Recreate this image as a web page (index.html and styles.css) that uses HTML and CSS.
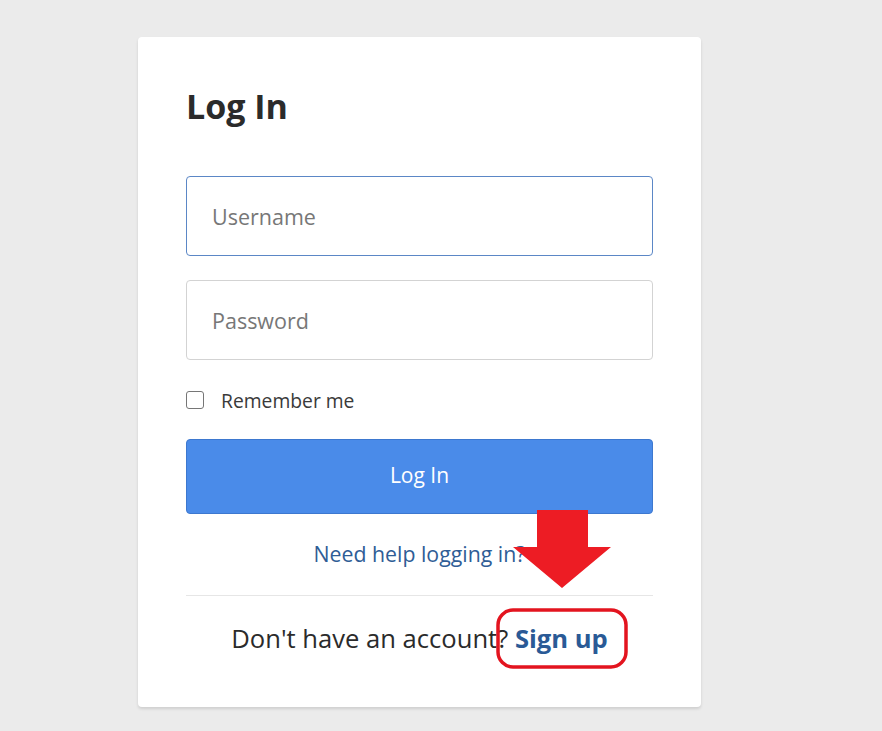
FILE: index.html
```html
<!DOCTYPE html>
<html>
<head>
<meta charset="utf-8">
<link rel="stylesheet" href="styles.css">
</head>
<body>
<div class="card">
  <h1 class="title">Log In</h1>
  <div class="field field-focus">Username</div>
  <div class="field">Password</div>
  <label class="remember"><span class="box"></span><span>Remember me</span></label>
  <div class="btn">Log In</div>
  <div class="help"><a class="help-link">Need help logging in?</a></div>
  <div class="divider"></div>
  <div class="signup">Don't have an account? <a class="signup-link">Sign up</a></div>
</div>
<svg class="overlay" width="882" height="731" viewBox="0 0 882 731">
  <polygon points="537,510 588,510 588,547 611,547 562,588 513,547 537,547" fill="#ed1c24"/>
  <rect x="498" y="610" width="128" height="57" rx="15" ry="15" fill="none" stroke="#e3141f" stroke-width="3.5"/>
</svg>
</body>
</html>
```
FILE: styles.css
```css
html, body {
  margin: 0;
  padding: 0;
}
body {
  background: #ebebeb;
  width: 882px;
  height: 731px;
  overflow: hidden;
  position: relative;
  font-family: "Open Sans", "Liberation Sans", sans-serif;
}
.card {
  margin: 37px 0 0 138px;
  width: 563px;
  height: 670px;
  box-sizing: border-box;
  padding: 46px 48px 0 48px;
  background: #fff;
  border-radius: 4px;
  box-shadow: 0 2px 3px rgba(0,0,0,0.12);
}
.title {
  margin: 0;
  font-size: 34px;
  line-height: 46px;
  font-weight: 700;
  color: #2b2b2b;
}
.field {
  margin-top: 47px;
  height: 80px;
  box-sizing: border-box;
  border: 1px solid #d3d3d3;
  border-radius: 4px;
  padding-left: 25px;
  display: flex;
  align-items: center;
  font-size: 21.5px;
  color: #777;
}
.field + .field {
  margin-top: 24px;
}
.field-focus {
  border-color: #5b87c6;
}
.remember {
  margin-top: 31px;
  display: flex;
  align-items: center;
  gap: 17px;
  font-size: 19.3px;
  color: #3a3a3a;
  height: 18px;
}
.box {
  width: 16px;
  height: 16px;
  border: 1px solid #767676;
  border-radius: 3px;
  flex: none;
}
.btn {
  margin-top: 30px;
  height: 75px;
  box-sizing: border-box;
  background: #4a8be9;
  border: 1px solid #3d78cf;
  border-radius: 4px;
  display: flex;
  align-items: center;
  justify-content: center;
  color: #fff;
  font-size: 21px;
  padding-bottom: 4px;
}
.help {
  margin-top: 24px;
  text-align: center;
  line-height: 32px;
  font-size: 21.3px;
}
.help-link {
  color: #2f5d96;
}
.divider {
  margin-top: 25px;
  height: 1px;
  background: #e6e6e6;
}
.signup {
  margin-top: 25px;
  text-align: center;
  font-size: 25.6px;
  line-height: 36px;
  color: #2b2b2b;
}
.signup-link {
  color: #2a5a96;
  font-weight: 700;
}
.overlay {
  position: absolute;
  left: 0;
  top: 0;
  pointer-events: none;
}
```
